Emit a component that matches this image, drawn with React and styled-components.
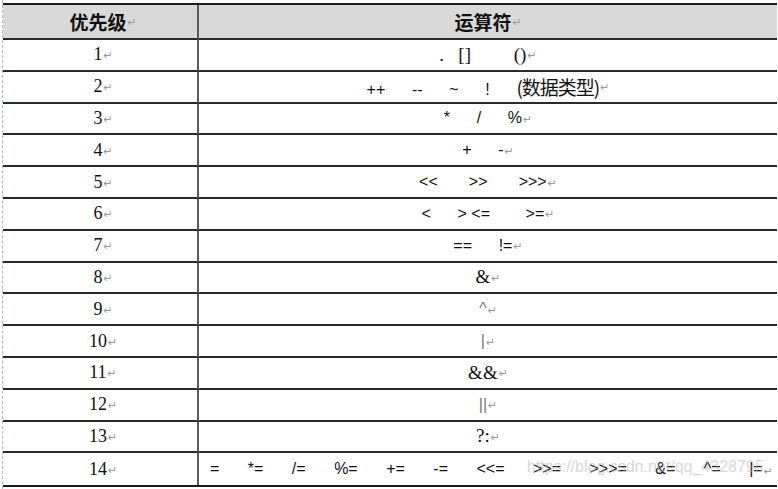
import styled, { createGlobalStyle } from "styled-components";

const Global = createGlobalStyle`
  html, body {
    margin: 0;
    padding: 0;
    background: #fff;
  }
`;

const Page = styled.div`
  position: relative;
  width: 778px;
  height: 489px;
  padding-left: 2px;
  box-sizing: border-box;
  overflow: hidden;
`;

const Margin = styled.div`
  height: 100%;
  border-left: 1px dashed #a7b6d3;
  padding-top: 3px;
  box-sizing: border-box;
`;

const Sheet = styled.div`
  width: 774px;
  display: grid;
  grid-template-columns: 196px 1fr;
  border-top: 2px solid #1b1b1b;
  border-bottom: 2px solid #1b1b1b;
`;

const Cell = styled.div`
  box-sizing: border-box;
  height: ${(p) => (p.$head ? "35px" : "31.8px")};
  background: ${(p) => (p.$head ? "#d9d9d9" : "#fff")};
  border-bottom: ${(p) => (p.$last ? "none" : "2px solid #2a2a2a")};
  border-right: ${(p) => (p.$left ? "2px solid #5a5a5a" : "none")};
  display: flex;
  align-items: center;
  justify-content: ${(p) => (p.$spread ? "space-between" : "center")};
  padding: ${(p) => (p.$spread ? "0 4px 0 11px" : "0")};
  padding-left: ${(p) => (p.$left ? "6px" : undefined)};
  color: #111;
`;

const HeadText = styled.span`
  font-family: "Noto Sans CJK SC", "Noto Sans", sans-serif;
  font-weight: 700;
  font-size: 19px;
  color: #111;
`;

const Num = styled.span`
  font-family: "Liberation Serif", serif;
  font-size: 18px;
`;

const Ops = styled.span`
  font-family: ${(p) => (p.$serif ? '"Liberation Serif", serif' : '"Liberation Sans", "Noto Sans CJK SC", sans-serif')};
  font-size: ${(p) => (p.$serif ? "19px" : "16px")};
  white-space: pre;
  color: ${(p) => (p.$light ? "#777" : "#111")};
`;

const Cjk = styled.span`
  font-family: "Noto Sans CJK SC", sans-serif;
  font-size: 19px;
  letter-spacing: -1px;
`;

const Mark = styled.span`
  font-family: "DejaVu Sans", sans-serif;
  font-size: 11px;
  color: #9a9a9a;
  margin-left: 1px;
  position: relative;
  top: 1px;
`;

const Watermark = styled.div`
  position: absolute;
  left: 527px;
  top: 458px;
  font-family: "Liberation Sans", sans-serif;
  font-size: 16px;
  color: rgba(175, 175, 175, 0.5);
  white-space: nowrap;
  pointer-events: none;
`;

const rows = [
  { n: "1", ops: ".   []         ()", serif: true },
  { n: "2", ops: "++      --      ~      !      ", extra: "(数据类型)" },
  { n: "3", ops: "*      /      %" },
  { n: "4", ops: "+      -" },
  { n: "5", ops: "<<       >>       >>>" },
  { n: "6", ops: "<      > <=        >=" },
  { n: "7", ops: "==      !=" },
  { n: "8", ops: "&", serif: true },
  { n: "9", ops: "^", light: true },
  { n: "10", ops: "|", light: true },
  { n: "11", ops: "&&", serif: true },
  { n: "12", ops: "||", light: true },
  { n: "13", ops: "?:", serif: true },
];

const assign = ["=", "*=", "/=", "%=", "+=", "-=", "<<=", ">>=", ">>>=", "&=", "^=", "|="];

export default function App() {
  return (
    <Page>
      <Global />
      <Margin>
        <Sheet>
          <Cell $head $left>
            <HeadText>优先级</HeadText>
            <Mark>↵</Mark>
          </Cell>
          <Cell $head>
            <HeadText>运算符</HeadText>
            <Mark>↵</Mark>
          </Cell>
          {rows.map((r) => (
            <>
              <Cell key={r.n + "a"} $left>
                <Num>{r.n}</Num>
                <Mark>↵</Mark>
              </Cell>
              <Cell key={r.n + "b"}>
                <Ops $serif={r.serif} $light={r.light}>
                  {r.ops}
                  {r.extra && <Cjk>{r.extra}</Cjk>}
                </Ops>
                <Mark>↵</Mark>
              </Cell>
            </>
          ))}
          <Cell $left $last>
            <Num>14</Num>
            <Mark>↵</Mark>
          </Cell>
          <Cell $last $spread>
            {assign.map((a, i) => (
              <Ops key={a}>
                {a}
                {i === assign.length - 1 && <Mark>↵</Mark>}
              </Ops>
            ))}
          </Cell>
        </Sheet>
      </Margin>
      <Watermark>https://blog.csdn.net/qq_4328795</Watermark>
    </Page>
  );
}
